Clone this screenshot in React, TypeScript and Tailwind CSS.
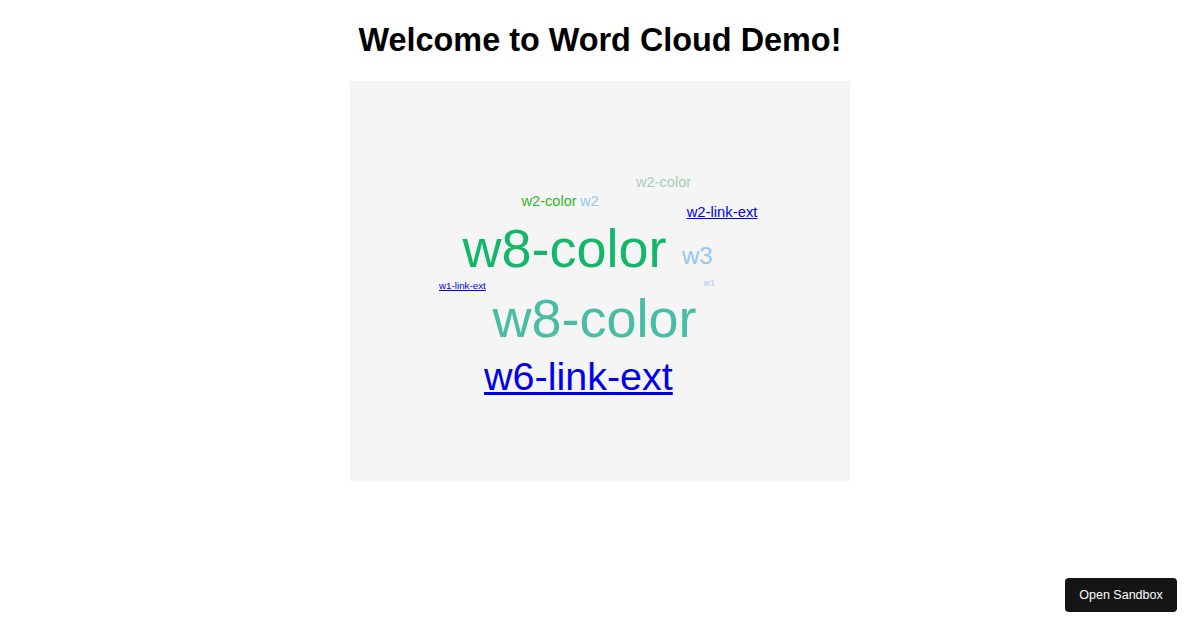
import React from "react";

type Word = {
  text: string;
  size: number;
  x: number; // ink left, page coords
  baseline: number; // page coords
  color: string;
  link?: boolean;
};

const BOX_X = 350;
const BOX_Y = 81;

const words: Word[] = [
  { text: "w2-color", size: 14.6, x: 636, baseline: 187.5, color: "#9ed2b6" },
  { text: "w2-color", size: 14.6, x: 521.5, baseline: 206.5, color: "#34b52a" },
  { text: "w2", size: 14.6, x: 580, baseline: 206.5, color: "#8fc9f2" },
  { text: "w2-link-ext", size: 14.8, x: 686.7, baseline: 217.5, color: "#0000ee", link: true },
  { text: "w8-color", size: 54, x: 462.5, baseline: 266.5, color: "#12b76a" },
  { text: "w3", size: 24, x: 682, baseline: 264, color: "#92c8f6" },
  { text: "w1-link-ext", size: 9.8, x: 439, baseline: 289.5, color: "#0000ee", link: true },
  { text: "w1", size: 9, x: 703.5, baseline: 287, color: "#a9c9f0" },
  { text: "w8-color", size: 54, x: 492.5, baseline: 336.5, color: "#48bca5" },
  { text: "w6-link-ext", size: 39.5, x: 484, baseline: 390, color: "#0000ee", link: true },
];

export default function App() {
  return (
    <div className="min-h-[630px] w-full bg-white font-['Liberation_Sans',Arial,sans-serif] text-black">
      <div className="flex flex-col items-center">
        <h1 className="mt-[22px] text-[32.4px] leading-[36px] font-bold">Welcome to Word Cloud Demo!</h1>
        <div className="relative mt-[23px] h-[400px] w-[500px] bg-[#f5f5f5]">
          {words.map((w, i) => {
            const style: React.CSSProperties = {
              left: w.x - BOX_X,
              top: w.baseline - BOX_Y - 0.8465 * w.size,
              fontSize: w.size,
              color: w.color,
            };
            return w.link ? (
              <a
                key={i}
                href="#"
                className="absolute whitespace-nowrap leading-none underline"
                style={style}
              >
                {w.text}
              </a>
            ) : (
              <span key={i} className="absolute whitespace-nowrap leading-none" style={style}>
                {w.text}
              </span>
            );
          })}
        </div>
      </div>
      <button className="fixed right-[23px] bottom-[18px] h-[34px] w-[112px] rounded-[4px] bg-[#151515] text-[12.5px] text-white">
        Open Sandbox
      </button>
    </div>
  );
}
